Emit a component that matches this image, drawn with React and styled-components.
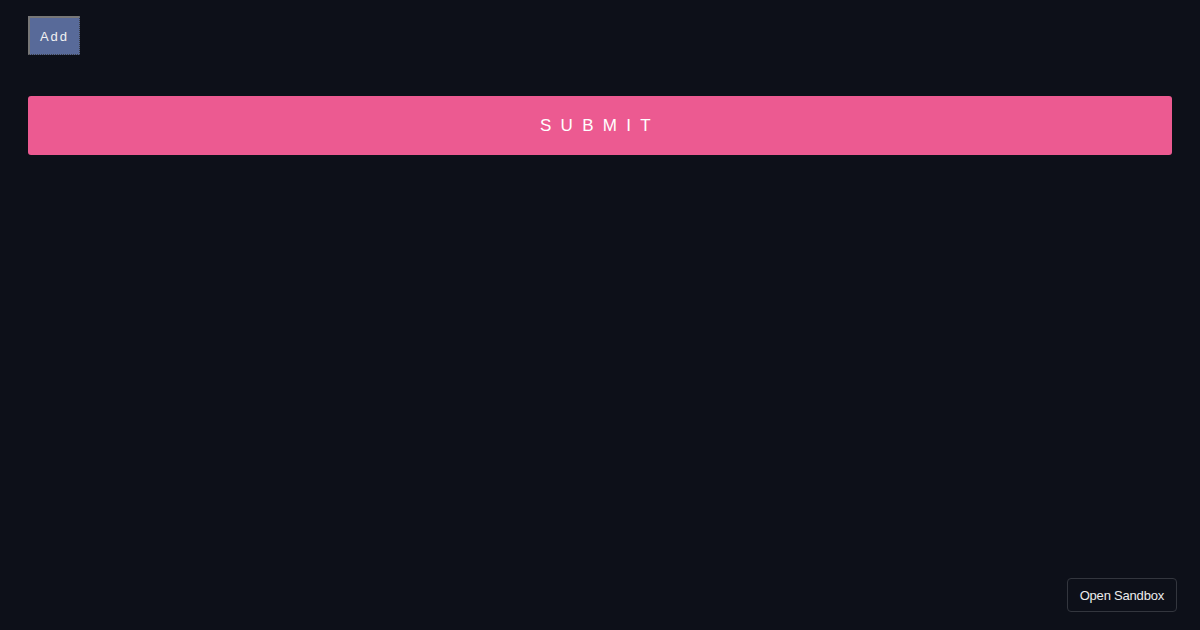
import React from "react";
import styled, { createGlobalStyle } from "styled-components";

const GlobalStyle = createGlobalStyle`
    html, body {
        margin: 0;
        background: #0d1019;
        font-family: "Liberation Sans", Arial, sans-serif;
    }
    #root {
        min-height: 630px;
    }
`

function App() {
    return (
        <Page>
            <GlobalStyle />
            <Toolbar>
                <AddButton>Add</AddButton>
            </Toolbar>
            <SubmitButton>SUBMIT</SubmitButton>
            <SandboxLink>Open Sandbox</SandboxLink>
        </Page>
    )
}

const Page = styled.div`
    position: relative;
    height: 630px;
    box-sizing: border-box;
    padding: 16px 28px 0 28px;
    display: flex;
    flex-direction: column;
    gap: 41px;
`

const Toolbar = styled.div`
    display: flex;
`

const AddButton = styled.button`
    width: 52px;
    height: 39px;
    box-sizing: border-box;
    padding: 0;
    background: #586a99;
    color: #f2f2f2;
    font-family: "Liberation Sans", Arial, sans-serif;
    font-size: 13px;
    letter-spacing: 2px;
    border-top: 2px solid #777777;
    border-left: 2px solid #777777;
    border-right: 1px dotted #3a3d45;
    border-bottom: 1px dotted #3a3d45;
    cursor: pointer;
`

const SubmitButton = styled.button`
    width: 100%;
    height: 59px;
    border: none;
    border-radius: 3px;
    background: #ec5a91;
    color: #ffffff;
    font-family: "Liberation Sans", Arial, sans-serif;
    font-size: 17px;
    letter-spacing: 9.3px;
    padding-left: 6px;
    cursor: pointer;
`

const SandboxLink = styled.button`
    position: absolute;
    right: 23px;
    bottom: 18px;
    height: 34px;
    padding: 0 12px;
    background: #0d1019;
    color: #ececec;
    border: 1px solid #33363e;
    border-radius: 4px;
    font-family: "Liberation Sans", Arial, sans-serif;
    font-size: 13px;
    letter-spacing: -0.2px;
    cursor: pointer;
`

export default App;
